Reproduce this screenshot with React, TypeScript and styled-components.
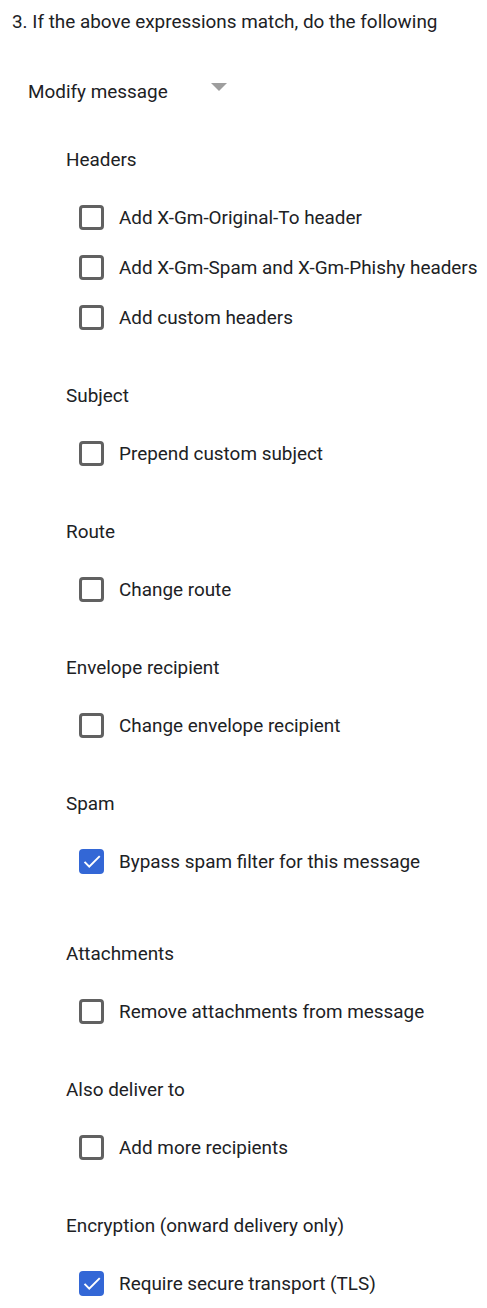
import styled, { createGlobalStyle } from "styled-components";

const GlobalStyle = createGlobalStyle`
    body {
        margin: 0;
        background: #ffffff;
        font-family: Roboto, "Liberation Sans", Arial, sans-serif;
        color: #202124;
    }
`;

type Option = { label: string; checked?: boolean };
type Group = { title: string; options: Option[]; extra?: boolean };

const groups: Group[] = [
    {
        title: "Headers",
        options: [
            { label: "Add X-Gm-Original-To header" },
            { label: "Add X-Gm-Spam and X-Gm-Phishy headers" },
            { label: "Add custom headers" },
        ],
    },
    { title: "Subject", options: [{ label: "Prepend custom subject" }] },
    { title: "Route", options: [{ label: "Change route" }] },
    {
        title: "Envelope recipient",
        options: [{ label: "Change envelope recipient" }],
    },
    {
        title: "Spam",
        options: [{ label: "Bypass spam filter for this message", checked: true }],
        extra: true,
    },
    {
        title: "Attachments",
        options: [{ label: "Remove attachments from message" }],
    },
    { title: "Also deliver to", options: [{ label: "Add more recipients" }] },
    {
        title: "Encryption (onward delivery only)",
        options: [{ label: "Require secure transport (TLS)", checked: true }],
    },
];

const Checkbox = ({ checked }: { checked?: boolean }) => (
    <Box $checked={checked}>
        {checked && (
            <svg width="22" height="22" viewBox="0 0 24 24">
                <path
                    d="M9 16.6L4.6 12.2l-1.5 1.5L9 19.6 21.2 7.4l-1.5-1.5z"
                    fill="#ffffff"
                />
            </svg>
        )}
    </Box>
);

const App = () => {
    return (
        <>
            <GlobalStyle />
            <Page>
                <StepTitle>3. If the above expressions match, do the following</StepTitle>
                <ActionSelect>
                    <span>Modify message</span>
                    <Arrow />
                </ActionSelect>
                <Groups>
                    {groups.map((g) => (
                        <Section key={g.title} $extra={g.extra}>
                            <SectionTitle>{g.title}</SectionTitle>
                            <OptionList>
                                {g.options.map((o) => (
                                    <OptionRow key={o.label}>
                                        <Checkbox checked={o.checked} />
                                        <span>{o.label}</span>
                                    </OptionRow>
                                ))}
                            </OptionList>
                        </Section>
                    ))}
                </Groups>
            </Page>
        </>
    );
};

const Page = styled.div`
    width: 487px;
    padding-top: 10px;
    font-size: 18.9px;
`;

const StepTitle = styled.div`
    padding-left: 12px;
    height: 24px;
    line-height: 24px;
`;

const ActionSelect = styled.div`
    display: flex;
    align-items: center;
    gap: 43px;
    margin-top: 46px;
    padding-left: 28px;
    height: 24px;
    line-height: 24px;
`;

const Arrow = styled.span`
    width: 0;
    height: 0;
    margin-top: -10px;
    border-left: 8.5px solid transparent;
    border-right: 8.5px solid transparent;
    border-top: 8px solid #9e9e9e;
`;

const Groups = styled.div`
    display: flex;
    flex-direction: column;
    gap: 42px;
    margin-top: 44px;
    padding-left: 66px;
`;

const Section = styled.div<{ $extra?: boolean }>`
    margin-bottom: ${({ $extra }) => ($extra ? "14px" : "0")};
`;

const SectionTitle = styled.div`
    height: 24px;
    line-height: 24px;
`;

const OptionList = styled.div`
    margin-top: 20px;
    display: flex;
    flex-direction: column;
`;

const OptionRow = styled.div`
    display: flex;
    align-items: center;
    gap: 15px;
    height: 50px;
    padding-left: 13px;
    white-space: nowrap;
`;

const Box = styled.span<{ $checked?: boolean }>`
    box-sizing: border-box;
    display: inline-flex;
    align-items: center;
    justify-content: center;
    flex: none;
    width: 25px;
    height: 25px;
    border-radius: 4px;
    border: ${({ $checked }) => ($checked ? "none" : "3px solid #616161")};
    background: ${({ $checked }) => ($checked ? "#3367d6" : "#ffffff")};
`;

export default App;
